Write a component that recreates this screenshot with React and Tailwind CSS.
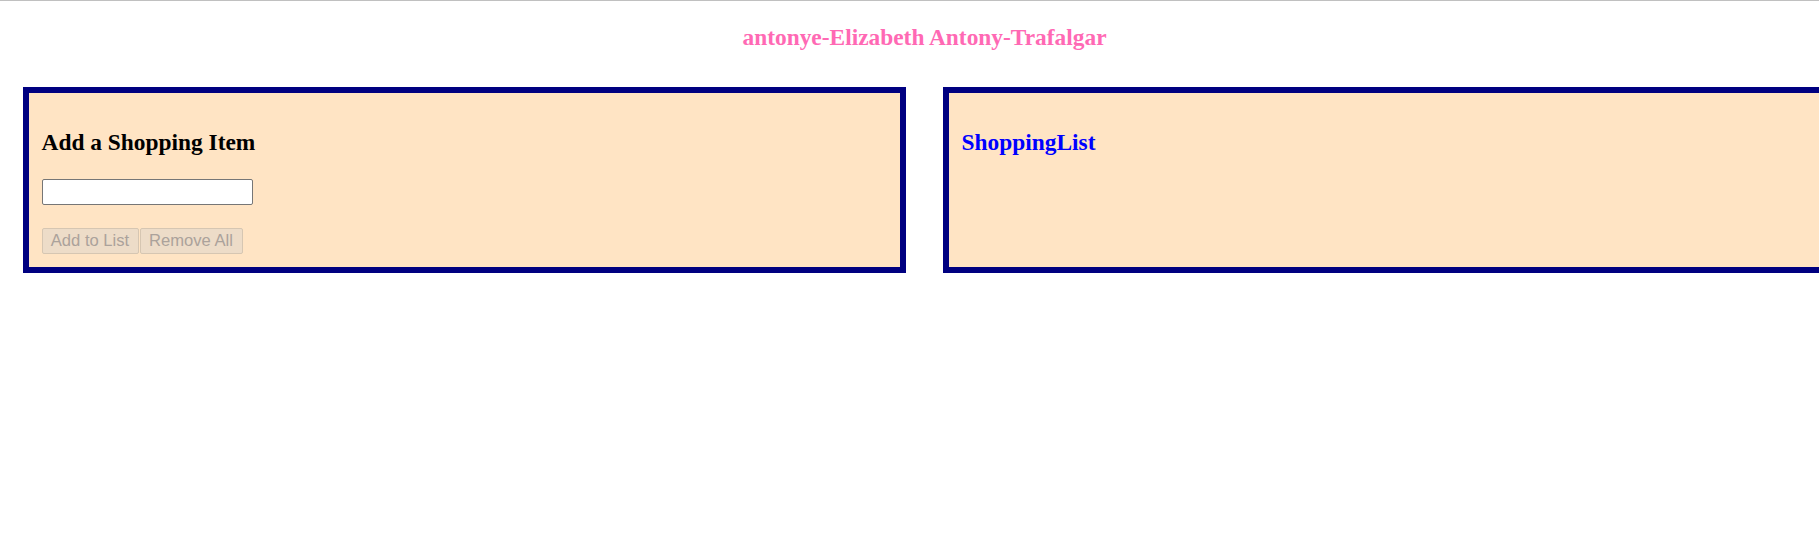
import { useState } from 'react';

function Panel({ children }) {
    return (
        <div className="border-[6px] border-[#000080] bg-[#ffe4c4] px-[12.5px] py-[12.5px]">
            {children}
        </div>
    );
}

function AddItemForm({ value, onChange }) {
    const empty = value.trim() === '';

    return (
        <form onSubmit={(e) => e.preventDefault()}>
            <h3 className="my-[23.4px] text-[23.4px] leading-[27px] font-bold text-black">Add a Shopping Item</h3>
            <input
                type="text"
                value={value}
                onChange={(e) => onChange(e.target.value)}
                className="block h-[26px] w-[211px] rounded-[2px] border border-[#767676] bg-white px-[2px] font-['Liberation_Sans',Arial,sans-serif] text-[16.6px] outline-none"
            />
            <div className="mt-[23px] flex font-['Liberation_Sans',Arial,sans-serif] text-[16.6px] leading-none">
                <button
                    type="submit"
                    disabled={empty}
                    className="h-[26px] w-[97px] rounded-[2px] border border-[#d6c6b2] bg-[#eddcc8] text-[#aba29b]"
                >
                    Add to List
                </button>
                <button
                    type="button"
                    disabled={empty}
                    className="ml-px h-[26px] w-[103px] rounded-[2px] border border-[#d6c6b2] bg-[#eddcc8] text-[#aba29b]"
                >
                    Remove All
                </button>
            </div>
        </form>
    );
}

export default function App() {
    const [item, setItem] = useState('');

    return (
        <div className="min-h-screen w-full overflow-hidden border-t border-[#c0c0c0] bg-white font-['Liberation_Serif','Times_New_Roman',serif]">
            <div className="w-[1849px] px-[23px]">
                <h3 className="mt-[23px] mb-[36px] text-center text-[23.4px] leading-[27px] font-bold text-[#ff69b4]">
                    antonye-Elizabeth Antony-Trafalgar
                </h3>

                <div className="grid grid-cols-2 gap-[37px]">
                    <Panel>
                        <AddItemForm value={item} onChange={setItem} />
                    </Panel>
                    <Panel>
                        <h3 className="my-[23.4px] text-[23.4px] leading-[27px] font-bold text-[#0000ff]">ShoppingList</h3>
                    </Panel>
                </div>
            </div>
        </div>
    );
}
